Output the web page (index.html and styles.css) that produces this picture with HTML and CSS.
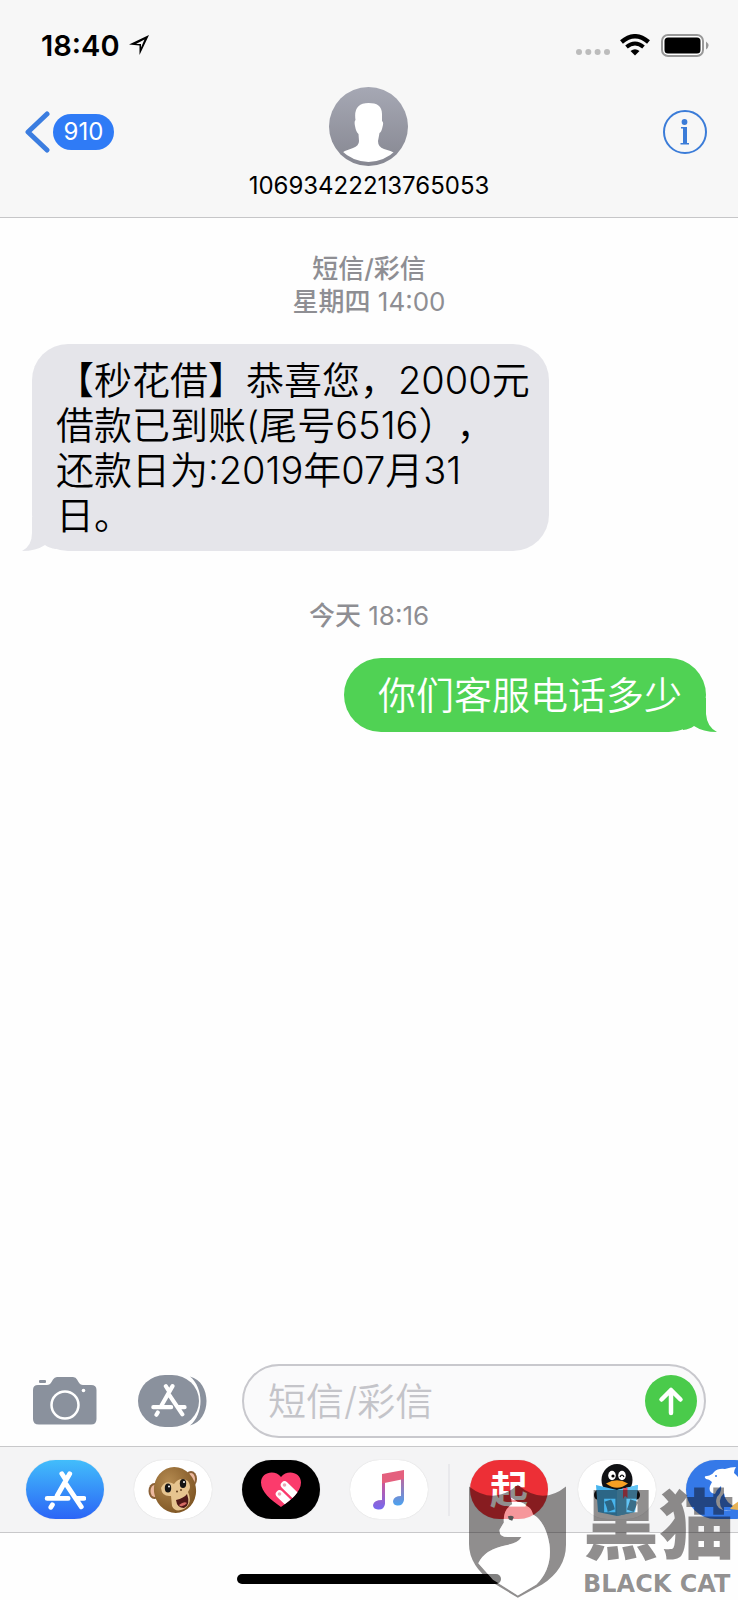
FILE: index.html
```html
<!DOCTYPE html>
<html lang="zh-CN">
<head>
    <meta charset="UTF-8">
    <meta name="viewport" content="width=device-width, initial-scale=1.0">
    <title>短信</title>
    <link rel="stylesheet" href="styles.css">
</head>
<body>
    <svg class="defs" width="0" height="0" aria-hidden="true">
        <symbol id="store" viewBox="0 0 40 38">
            <g fill="none" stroke="currentColor" stroke-width="4.6" stroke-linecap="round">
                <path d="M17 3.5 L20.5 9 M24.500 3.500 L12.500 24.500 M3 27 H23 M31 27 H38 M21 13.500 L35.500 35 M8 33 L6.500 35.500"/>
            </g>
        </symbol>
    </svg>

    <header class="header">
        <div class="status">
            <span class="clock">18:40</span>
            <svg class="locate" width="20" height="20" viewBox="0 0 20 20"><path d="M0 9.500 L20 0 L10.500 20 L10.500 10.500 Z"/><path d="M7 9 L15.500 4.500 L12 12.500 L12 9 Z" fill="#f7f7f7"/></svg>
            <svg class="dots" width="34" height="6" viewBox="0 0 34 6" fill="#bcbcbc"><circle cx="3" cy="3" r="3"/><circle cx="12.300" cy="3" r="3"/><circle cx="21.600" cy="3" r="3"/><circle cx="31" cy="3" r="3"/></svg>
            <svg class="wifi" width="30" height="22" viewBox="0 0 30 22">
                <path d="M1.500 8 Q15 -3.500 28.500 8" fill="none" stroke="#000" stroke-width="4.400"/>
                <path d="M6.500 13 Q15 6 23.500 13" fill="none" stroke="#000" stroke-width="4"/>
                <path d="M10.500 17 Q15 13.500 19.500 17 L15 21.500 Z"/>
            </svg>
            <svg class="battery" width="48" height="23" viewBox="0 0 48 23">
                <rect x="1" y="1" width="41" height="21" rx="6" fill="#fff" stroke="#989898" stroke-width="2"/>
                <rect x="3.500" y="3.500" width="36" height="16" rx="3.500"/>
                <path d="M45 7.500 Q50 11.500 45 15.500 Z" fill="#989898"/>
            </svg>
        </div>
        <div class="nav">
            <a class="back" href="#" aria-label="返回">
                <svg width="26" height="42" viewBox="0 0 26 42"><path d="M22 3 L3 21 L22 39" fill="none" stroke="#3b7de0" stroke-width="5" stroke-linecap="round" stroke-linejoin="round"/></svg>
                <span class="count">910</span>
            </a>
            <div class="contact">
                <svg width="79" height="79" viewBox="0 0 79 79">
                    <defs>
                        <linearGradient id="gray" x1="0" y1="0" x2="0" y2="1"><stop offset="0" stop-color="#a6a8b4"/><stop offset="1" stop-color="#868791"/></linearGradient>
                        <clipPath id="face"><circle cx="39.500" cy="37" r="38"/></clipPath>
                    </defs>
                    <circle cx="39.500" cy="39.500" r="39.500" fill="url(#gray)"/>
                    <path clip-path="url(#face)" fill="#fff" d="M39.500 16 C48 16 53 19 53 27 L53 34 Q55 35 53.500 40 Q52.500 45 50.500 46 L49 54 Q49 60 55 62 Q63 64 68 67 V80 H11 V67 Q17 63 24 61 Q30 59 30 54 L29.500 47 Q27 45 26 39 Q25 34 26.500 33 Q24 16 39.500 16 Z"/>
                </svg>
                <h1 class="number">10693422213765053</h1>
            </div>
            <button class="info" type="button" aria-label="详细信息">
                <svg width="44" height="44" viewBox="0 0 44 44" fill="#3b7cd8">
                    <circle cx="22" cy="22" r="21" fill="none" stroke="#3b7cd8" stroke-width="2"/>
                    <circle cx="21.500" cy="12" r="2.900"/>
                    <path d="M18 17 H24 V33 H26 V34.500 H17.500 V33 H20 V18.500 H18 Z"/>
                </svg>
            </button>
        </div>
    </header>

    <main class="thread">
        <p class="stamp"><b>短信/彩信</b><br><b>星期四</b> 14:00</p>
        <div class="bubble received">
            【秒花借】恭喜您，2000元<br>借款已到账(尾号6516），<br>还款日为:2019年07月31<br>日。
            <svg class="tail" width="34" height="34" viewBox="0 0 34 34"><path d="M10 0 V16 Q10 29 0 34 Q14 34 23 28 Q27 31 34 32 V0 Z" fill="#e5e5ea"/></svg>
        </div>
        <p class="stamp"><b>今天</b> 18:16</p>
        <div class="bubble sent">
            你们客服电话多少
            <svg class="tail" width="34" height="34" viewBox="0 0 34 34"><path d="M23 0 V16 Q24 29 34 34 Q20 34 11 28 Q7 31 0 32 V0 Z" fill="#50d254"/></svg>
        </div>
    </main>

    <form class="compose">
        <button class="camera" type="button" aria-label="相机">
            <svg width="64" height="48" viewBox="0 0 64 48" fill="#8a919d">
                <rect x="6" y="3" width="7" height="3" rx="1"/>
                <path d="M5 8 H14 Q17 8 18.500 5 L20 2.500 Q21.500 0 24 0 H40 Q43 0 44 2.500 L45.500 5 Q47 8 50 8 H58 Q63.500 8 63.500 13 V42 Q63.500 47.500 58 47.500 H6 Q0 47.500 0 42 V13 Q0 8 5 8 Z"/>
                <circle cx="32" cy="28" r="13.500" fill="none" stroke="#fff" stroke-width="2.500"/>
                <circle cx="50.500" cy="13.500" r="1.800" fill="#fff"/>
            </svg>
        </button>
        <button class="apps" type="button" aria-label="应用">
            <svg width="70" height="52" viewBox="0 0 70 52">
                <path d="M52 1.500 C74 7 74 45 52 50.500 C66 39 66 13 52 1.500 Z" fill="#8a919d"/>
                <rect x="0" y="0" width="61" height="52" rx="27" fill="#8a919d"/>
                <use href="#store" x="12" y="8" width="37" height="34" color="#fff"/>
            </svg>
        </button>
        <div class="field">
            <input type="text" placeholder="短信/彩信" aria-label="短信/彩信">
            <button class="send" type="submit" aria-label="发送">
                <svg width="52" height="52" viewBox="0 0 52 52">
                    <circle cx="26" cy="26" r="26" fill="#4acb4b"/>
                    <path d="M26 38 V15 M16.500 24.500 L26 15 L35.500 24.500" fill="none" stroke="#fff" stroke-width="4.500" stroke-linecap="round" stroke-linejoin="round"/>
                </svg>
            </button>
        </div>
    </form>

    <nav class="drawer">
        <button class="app store" type="button" aria-label="App Store"><svg width="42" height="40"><use href="#store"/></svg></button>
        <button class="app" type="button" aria-label="动话表情">
            <svg width="50" height="48" viewBox="0 0 50 48">
                <defs><radialGradient id="fur" cx=".4" cy=".3" r=".8"><stop offset="0" stop-color="#b48a50"/><stop offset="1" stop-color="#79501f"/></radialGradient></defs>
                <ellipse cx="6.500" cy="25" rx="6" ry="8" fill="#8a6036"/><ellipse cx="6.500" cy="25" rx="4" ry="6" fill="#edb9a0"/>
                <ellipse cx="43" cy="13" rx="6" ry="8" fill="#8a6036"/><ellipse cx="43" cy="13" rx="4" ry="6" fill="#edb9a0"/>
                <ellipse cx="27" cy="24" rx="21" ry="23" fill="url(#fur)" transform="rotate(-12 27 24)"/>
                <path d="M13 22 Q17 13 26 18 Q32 10 40 15 Q44 21 40 26 Q45 37 36 43 Q27 47 24 40 L23 30 Q14 31 13 22 Z" fill="#e6c48f"/>
                <ellipse cx="20" cy="22" rx="3.200" ry="4.500" fill="#141414"/><ellipse cx="35" cy="17.500" rx="3.200" ry="4.500" fill="#141414"/>
                <circle cx="21" cy="20.500" r="1" fill="#fff"/><circle cx="36" cy="16" r="1" fill="#fff"/>
                <circle cx="29" cy="25.500" r="1" fill="#62401f"/><circle cx="33" cy="24" r="1" fill="#62401f"/>
                <path d="M28 34 Q36 32 39 28 Q43 39 36 42 Q29 42 28 34 Z" fill="#4d1716"/>
                <path d="M31 39 Q36 35 39 37 Q36 41 32 40 Z" fill="#d56c65"/>
            </svg>
        </button>
        <button class="app touch" type="button" aria-label="Digital Touch">
            <svg width="40" height="36" viewBox="0 0 40 36">
                <defs><clipPath id="heart"><path d="M20 35 C10 28 0 20 0 10.500 C0 0 14 -3 20 5 C26 -3 40 0 40 10.500 C40 20 30 28 20 35 Z"/></clipPath></defs>
                <g clip-path="url(#heart)">
                    <rect width="40" height="36" fill="#fb3b6c"/>
                    <path d="M23.500 13 L42 31 M18.500 22 L36 39" stroke="#fff" stroke-width="7.500" stroke-linecap="round"/>
                    <circle cx="23.500" cy="13" r="1.800" fill="#eaa7b6"/><circle cx="18.500" cy="22" r="1.800" fill="#eaa7b6"/>
                </g>
            </svg>
        </button>
        <button class="app" type="button" aria-label="音乐">
            <svg width="32" height="40" viewBox="0 0 32 40">
                <defs>
                    <linearGradient id="left" x1="0" y1="0" x2="0" y2="1"><stop offset="0" stop-color="#e8527b"/><stop offset="1" stop-color="#7569f0"/></linearGradient>
                    <linearGradient id="right" x1="0" y1="0" x2="0" y2="1"><stop offset="0" stop-color="#d8588d"/><stop offset="1" stop-color="#4aa3f0"/></linearGradient>
                </defs>
                <path d="M9 4 H12 V34 Q11 40 5 39.500 Q0 39 0 35 Q1 30 9 30 Z" fill="url(#left)"/>
                <path d="M28 1 H31 V30 Q30 36 24 35.500 Q20 35 20 31 Q21 26 28 26 Z" fill="url(#right)"/>
                <path d="M9 4 L31 0 V9 L9 13.500 Z" fill="#e4607e"/>
            </svg>
        </button>
        <span class="divider"></span>
        <button class="app qidian" type="button">起</button>
        <button class="app" type="button" aria-label="QQ阅读">
            <svg width="46" height="52" viewBox="0 0 46 52">
                <ellipse cx="23" cy="16" rx="15.500" ry="16" fill="#101114"/>
                <ellipse cx="4.500" cy="31" rx="4.500" ry="5" fill="#101114"/><ellipse cx="41.500" cy="31" rx="4.500" ry="5" fill="#101114"/>
                <ellipse cx="18" cy="11.500" rx="3.800" ry="4.700" fill="#fff"/><ellipse cx="28" cy="11.500" rx="3.800" ry="4.700" fill="#fff"/>
                <circle cx="19" cy="12" r="1.600"/><path d="M26 13 Q28 9 30 13" fill="none" stroke="#000" stroke-width="1.200"/>
                <path d="M12 19.500 Q23 13 34 19.500 Q23 28 12 19.500 Z" fill="#f7a023"/>
                <path d="M2 21 L23 26 L44 21 L41 48 L23 52 L4 48 Z" fill="#48b5ee"/>
                <path d="M23 26 L44 21 L41 48 L23 52 Z" fill="#62c4f5"/>
                <path d="M29 24.500 L33.500 23.500 V34 L31 32 L29 35 Z" fill="#e24a5e"/>
            </svg>
        </button>
        <button class="app dolphin" type="button" aria-label="海豚">
            <svg width="44" height="46" viewBox="0 0 44 46">
                <path d="M3 12 Q0 9 4 9 Q9 8 11 5 Q15 1 22 2 Q28 0 33 0 Q31 3 31 6 Q41 14 40 28 Q38 42 24 44 Q10 42 14 30 Q19 25 18 19 Q14 22 12 27 Q5 26 7 19 L9 15 Q6 12 3 12 Z" fill="#fff"/>
                <circle cx="13" cy="9" r="1" fill="#3579e8"/>
                <path d="M20 43 Q13 34 21 26 Q22 36 34 41 Q28 45 20 43 Z" fill="#3579e8"/>
                <path d="M27 42 Q32 34 44 32 V44 Z" fill="#e8b355"/>
            </svg>
        </button>
    </nav>

    <footer class="home"><span class="home-bar"></span></footer>

    <div class="watermark">
        <svg width="97" height="115" viewBox="0 0 292 345">
            <path fill-rule="evenodd" d="M0 7 Q75 65 147 2 Q220 65 292 7 V182 Q292 255 220 302 L147 342 L72 297 Q0 245 0 180 Z M126 40 L146 53 Q166 55 174 66 Q188 72 193 91 Q230 112 242 180 Q252 252 203 302 L147 335 L72 288 L28 238 Q48 195 115 183 Q148 177 158 159 H119 Q90 160 92 137 L105 115 Q101 78 130 60 Z" fill="#0a0606" fill-opacity=".45"/>
            <path d="M126 40 L146 53 Q166 55 174 66 Q188 72 193 91 Q230 112 242 180 Q252 252 203 302 L147 335 L72 288 L28 238 Q48 195 115 183 Q148 177 158 159 H119 Q90 160 92 137 L105 115 Q101 78 130 60 Z" fill="#fff" fill-opacity=".5"/>
            <path d="M117 97 Q128 92 135 99 L130 110 L120 106 Z" fill="#555"/>
        </svg>
        <div class="brand">
            <span class="brand-cn">黑猫</span>
            <span class="brand-en">BLACK CAT</span>
        </div>
    </div>
</body>
</html>
```

FILE: styles.css
```css
* {
    box-sizing: border-box;
}
body {
    margin: 0;
    min-height: 100vh;
    display: flex;
    flex-direction: column;
    position: relative;
    overflow-x: hidden;
    background: #fefefe;
    color: #000;
    font-family: Inter, "Noto Sans CJK SC", sans-serif;
    text-spacing-trim: space-all;
}
button {
    padding: 0;
    border: none;
    background: none;
    font-family: inherit;
    cursor: pointer;
}
svg {
    display: block;
    flex: none;
}
.defs {
    position: absolute;
}

/* Header */
.header {
    background: #f7f7f7;
    border-bottom: 1px solid #c6c6c8;
    padding: 27px 25px 15px;
}
.status {
    display: flex;
    align-items: center;
    height: 36px;
    padding: 0 4px 0 16px;
}
.clock {
    font-size: 29px;
    font-weight: 600;
}
.locate {
    margin-left: 9px;
}
.dots {
    margin-left: auto;
    margin-top: 14px;
}
.wifi {
    margin: 0 11px 0 10px;
}
.nav {
    display: grid;
    grid-template-columns: 1fr auto 1fr;
    padding-top: 24px;
}
.back {
    display: flex;
    align-items: center;
    gap: 2px;
    height: 42px;
    margin-top: 24px;
    text-decoration: none;
}
.count {
    width: 61px;
    border-radius: 18px;
    background: #2f7bf6;
    color: #fff;
    font-size: 24px;
    line-height: 36px;
    text-align: center;
}
.contact {
    display: flex;
    flex-direction: column;
    align-items: center;
    gap: 4px;
}
.number {
    margin: 0;
    font-size: 24px;
    font-weight: 400;
    line-height: 32px;
}
.info {
    justify-self: end;
    align-self: start;
    margin: 23px 6px 0 0;
}

/* Messages */
.thread {
    flex: 1;
    display: flex;
    flex-direction: column;
    padding: 34px 32px;
}
.stamp {
    margin: 0 0 26px;
    color: #8e8e93;
    font-size: 26px;
    line-height: 33px;
    text-align: center;
}
.stamp b {
    font-weight: 500;
}
.bubble {
    position: relative;
    font-size: 38px;
    font-weight: 350;
    line-height: 45px;
}
.received {
    align-self: flex-start;
    min-width: 517px;
    margin-bottom: 48px;
    padding: 14px 18px 13px 24px;
    border-radius: 36px;
    background: #e5e5ea;
}
.sent {
    align-self: flex-end;
    padding: 15px 24px 14px 34px;
    border-radius: 37px;
    background: #50d254;
    color: #fff;
}
.tail {
    position: absolute;
    bottom: 0;
}
.received .tail {
    left: -10px;
}
.sent .tail {
    right: -11px;
}

/* Input row */
.compose {
    display: flex;
    align-items: center;
    padding: 0 32px 8px 33px;
}
.apps {
    margin: 0 34px 0 41px;
}
.field {
    flex: 1;
    min-width: 0;
    display: flex;
    align-items: center;
    height: 74px;
    padding: 0 7px 0 24px;
    border: 2px solid #c8c8cd;
    border-radius: 37px;
    background: #fafafb;
}
.field input {
    flex: 1;
    min-width: 0;
    padding: 0;
    border: none;
    outline: none;
    background: none;
    font-family: inherit;
    font-size: 38px;
    font-weight: 350;
}
.field input::placeholder {
    color: #c4c4c9;
}

/* App drawer */
.drawer {
    display: flex;
    align-items: center;
    gap: 30px;
    height: 87px;
    padding-left: 26px;
    border-top: 1px solid #c8c8ca;
    border-bottom: 1px solid #c8c8ca;
    background: #f4f4f5;
    overflow: hidden;
}
.app {
    flex: none;
    display: flex;
    align-items: center;
    justify-content: center;
    width: 78px;
    height: 59px;
    border-radius: 30px;
    background: #fff;
    box-shadow: 0 0 1px #c8c8c8;
}
.store {
    background: linear-gradient(#42bdfb, #2b65f6);
    color: #fff;
}
.touch {
    background: #000;
}
.qidian {
    background: #ed2f36;
    color: #fff;
    font-size: 38px;
    font-weight: 700;
    line-height: 59px;
}
.dolphin {
    background: #3579e8;
}
.divider {
    flex: none;
    width: 2px;
    height: 52px;
    margin: 0 -10px;
    background: #e9e9ec;
}
.home {
    display: flex;
    justify-content: center;
    align-items: flex-end;
    height: 67px;
    padding-bottom: 16px;
}
.home-bar {
    width: 264px;
    height: 10px;
    border-radius: 5px;
    background: #000;
}

/* Watermark */
.watermark {
    position: absolute;
    right: 0;
    bottom: 1px;
    display: flex;
    gap: 17px;
    color: rgba(10, 6, 6, 0.45);
    pointer-events: none;
}
.brand {
    display: flex;
    flex-direction: column;
    justify-content: flex-end;
    gap: 6px;
    width: 155px;
    white-space: nowrap;
}
.brand-cn {
    font-size: 76px;
    font-weight: 900;
    line-height: 76px;
}
.brand-en {
    font-family: "DejaVu Sans", sans-serif;
    font-size: 24px;
    font-weight: 700;
    line-height: 30px;
}
```
